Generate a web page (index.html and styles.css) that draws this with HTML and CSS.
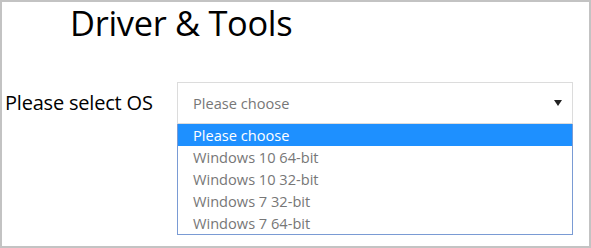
FILE: index.html
```html
<!DOCTYPE html>
<html>
<head>
<meta charset="utf-8">
<link rel="stylesheet" href="styles.css">
</head>
<body>
<div class="frame">
  <h1 class="title">Driver &amp; Tools</h1>
  <div class="row">
    <label class="label">Please select OS</label>
    <div class="select-wrap">
      <div class="select">
        <span class="select-value">Please choose</span>
        <span class="caret"></span>
      </div>
      <ul class="options">
        <li class="option active">Please choose</li>
        <li class="option">Windows 10 64-bit</li>
        <li class="option">Windows 10 32-bit</li>
        <li class="option">Windows 7 32-bit</li>
        <li class="option">Windows 7 64-bit</li>
      </ul>
    </div>
  </div>
</div>
</body>
</html>
```
FILE: styles.css
```css
html, body {
  margin: 0;
  padding: 0;
  background: #fff;
}
.frame {
  box-sizing: border-box;
  width: 591px;
  height: 248px;
  border: 2px solid #c3c3c3;
  font-family: "Open Sans", "Noto Sans", sans-serif;
  color: #000;
}
.title {
  margin: 0;
  padding: 0 0 0 68px;
  font-weight: 400;
  font-size: 34.4px;
  line-height: 42px;
  height: 41px;
  letter-spacing: -0.3px;
}
.row {
  display: flex;
  align-items: flex-start;
  margin-top: 39px;
}
.label {
  width: 175px;
  padding-left: 3px;
  font-size: 20px;
  line-height: 40px;
  padding-top: 1px;
  box-sizing: border-box;
  letter-spacing: -0.2px;
}
.select-wrap {
  position: relative;
  width: 396px;
}
.select {
  box-sizing: border-box;
  height: 42px;
  border: 1px solid #dcdcdc;
  display: flex;
  align-items: center;
  justify-content: space-between;
  padding: 0 10px 0 15px;
  font-size: 14.6px;
  color: #777;
}
.caret {
  width: 0;
  height: 0;
  border-left: 4.5px solid transparent;
  border-right: 4.5px solid transparent;
  border-top: 6px solid #222;
  margin-bottom: 1px;
}
.options {
  position: absolute;
  top: 42px;
  left: 0;
  right: 0;
  margin: 0;
  padding: 0;
  list-style: none;
  border: 1px solid #7a9bd4;
  border-top: none;
  background: #fff;
}
.option {
  height: 22px;
  line-height: 22px;
  padding-left: 15px;
  font-size: 14.6px;
  color: #777;
}
.option.active {
  background: #1e90ff;
  color: #fff;
}
```
